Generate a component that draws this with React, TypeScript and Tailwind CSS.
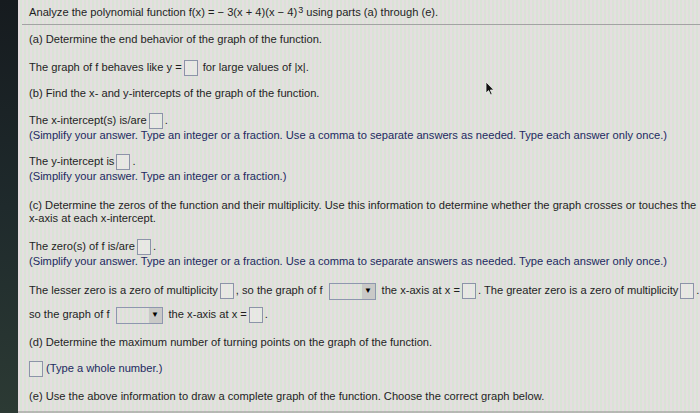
import React from 'react';

function Box({ className = '' }: { className?: string }) {
  return (
    <span
      className={`mx-[2px] -my-[3px] inline-block h-[16px] w-[14px] border border-[#8c94a8] bg-[#f2f2f0]/40 align-middle ${className}`}
    />
  );
}

function Drop() {
  return (
    <span className="mx-[6px] -my-[3px] inline-flex h-[17px] w-[47px] items-stretch border border-[#8e97ae] align-middle">
      <span className="flex-1" />
      <span className="flex w-[13px] items-center justify-center bg-[#c9c9c7] text-[8px] leading-none text-black">▼</span>
    </span>
  );
}

function Row({ mt, children, hint = false }: { mt: string; children: React.ReactNode; hint?: boolean }) {
  return (
    <div className={`${mt} h-[15px] whitespace-nowrap leading-[15px] ${hint ? 'text-[#222a60]' : 'text-[#1f1f1f]'}`}>
      {children}
    </div>
  );
}

export default function App() {
  return (
    <div className="flex h-[413px] w-[700px] overflow-hidden bg-[#1b2125]">
      <div className="relative w-[18px] shrink-0 bg-gradient-to-b from-[#161b1f] via-[#1f2a2c] to-[#2c3a34]" />
      <div
        className="relative flex-1 bg-[#e0e0db] bg-[repeating-linear-gradient(90deg,#e6dde1_0px,#e6dde1_2px,#d9e4d6_2px,#d9e4d6_4px)] text-[11.15px]"
        style={{ fontFamily: '"Liberation Sans", Arial, sans-serif' }}
      >
        <div className="pl-[11px]">
          <Row mt="mt-[5px]">
            Analyze the polynomial function f(x) = − 3(x + 4)(x − 4)
            <sup className="relative -top-[3px] ml-[1px] text-[9px]">3</sup> using parts (a) through (e).
          </Row>
        </div>
        <div className="mt-[4px] ml-[4px] h-px bg-[#a3a3a3]" />
        <div className="flex flex-col pl-[11px]">
          <Row mt="mt-[7px]">(a) Determine the end behavior of the graph of the function.</Row>
          <Row mt="mt-[13px]">
            The graph of f behaves like y =<Box /> for large values of |x|.
          </Row>
          <Row mt="mt-[11px]">(b) Find the x- and y-intercepts of the graph of the function.</Row>
          <Row mt="mt-[12px]">
            The x-intercept(s) is/are<Box />.
          </Row>
          <Row mt="mt-0" hint>
            (Simplify your answer. Type an integer or a fraction. Use a comma to separate answers as needed. Type each answer only once.)
          </Row>
          <Row mt="mt-[11px]">
            The y-intercept is<Box />.
          </Row>
          <Row mt="mt-0" hint>
            (Simplify your answer. Type an integer or a fraction.)
          </Row>
          <Row mt="mt-[14px]">
            (c) Determine the zeros of the function and their multiplicity. Use this information to determine whether the graph crosses or touches the
          </Row>
          <Row mt="-mt-[2px]">x-axis at each x-intercept.</Row>
          <Row mt="mt-[13px]">
            The zero(s) of f is/are<Box />.
          </Row>
          <Row mt="mt-0" hint>
            (Simplify your answer. Type an integer or a fraction. Use a comma to separate answers as needed. Type each answer only once.)
          </Row>
          <Row mt="mt-[14px]">
            The lesser zero is a zero of multiplicity<Box />, so the graph of f<Drop />the x-axis at x =<Box />. The greater zero is a zero of multiplicity<Box />.
          </Row>
          <Row mt="mt-[9px]">
            so the graph of f<Drop />the x-axis at x =<Box />.
          </Row>
          <Row mt="mt-[13px]">(d) Determine the maximum number of turning points on the graph of the function.</Row>
          <Row mt="mt-[11px]">
            <Box className="!ml-0 !mr-[3px]" />
            <span className="text-[#222a60]">(Type a whole number.)</span>
          </Row>
          <Row mt="mt-[13px]">(e) Use the above information to draw a complete graph of the function. Choose the correct graph below.</Row>
        </div>
        <svg className="absolute left-[467px] top-[81px]" width="10" height="15" viewBox="0 0 10 15">
          <path d="M1 1 L1 12 L3.6 9.6 L5.6 14 L7.2 13.3 L5.3 9 L8.8 9 Z" fill="#111" stroke="#eee" strokeWidth="0.8" />
        </svg>
        <div className="absolute bottom-0 left-0 right-0 h-[2px] bg-[#8d8f8c]/50" />
      </div>
    </div>
  );
}
